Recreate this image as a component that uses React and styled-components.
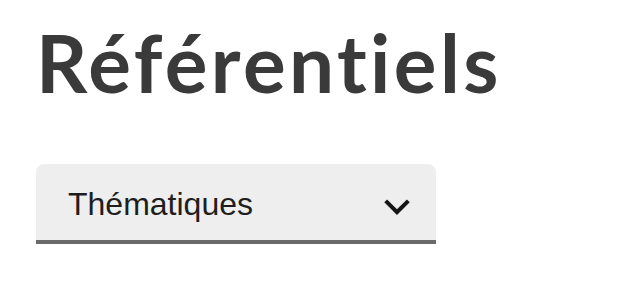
import React from "react";
import styled, { createGlobalStyle } from "styled-components";

const Global = createGlobalStyle`
  html, body { margin: 0; padding: 0; background: #ffffff; }
  body { font-family: "Liberation Sans", Arial, sans-serif; }
`;

const Page = styled.main`
  padding: 0 36px;
  display: flex;
  flex-direction: column;
  align-items: flex-start;
`;

const Title = styled.h1`
  margin: 14px 0 0 0;
  font-family: Lato, "Noto Sans", sans-serif;
  font-weight: 700;
  font-size: 80px;
  line-height: 96px;
  color: #3a3a3a;
  letter-spacing: 3.4px;
  font-variant-ligatures: none;
  font-feature-settings: "liga" 0, "clig" 0;
`;

const SelectBox = styled.div`
  margin-top: 54px;
  width: 400px;
  height: 80px;
  box-sizing: border-box;
  display: flex;
  align-items: center;
  justify-content: space-between;
  padding: 16px 15px 16px 32px;
  background: #eeeeee;
  border-radius: 8px 8px 0 0;
  box-shadow: inset 0 -4px 0 0 #6a6a6a;
  font-family: "Liberation Sans", Arial, sans-serif;
  font-size: 32px;
  line-height: 48px;
  color: #1e1e1e;
`;

const Label = styled.span`
  display: block;
`;

const Chevron = styled.svg`
  width: 48px;
  height: 48px;
  flex: none;
  margin-top: 6px;
`;

export default function App() {
  return (
    <>
      <Global />
      <Page>
        <Title>Référentiels</Title>
        <SelectBox role="combobox" aria-expanded="false">
          <Label>Thématiques</Label>
          <Chevron viewBox="0 0 24 24" aria-hidden="true">
            <path
              fill="#161616"
              d="M12 13.172l4.95-4.95 1.414 1.414L12 16 5.636 9.636 7.05 8.222z"
            />
          </Chevron>
        </SelectBox>
      </Page>
    </>
  );
}
